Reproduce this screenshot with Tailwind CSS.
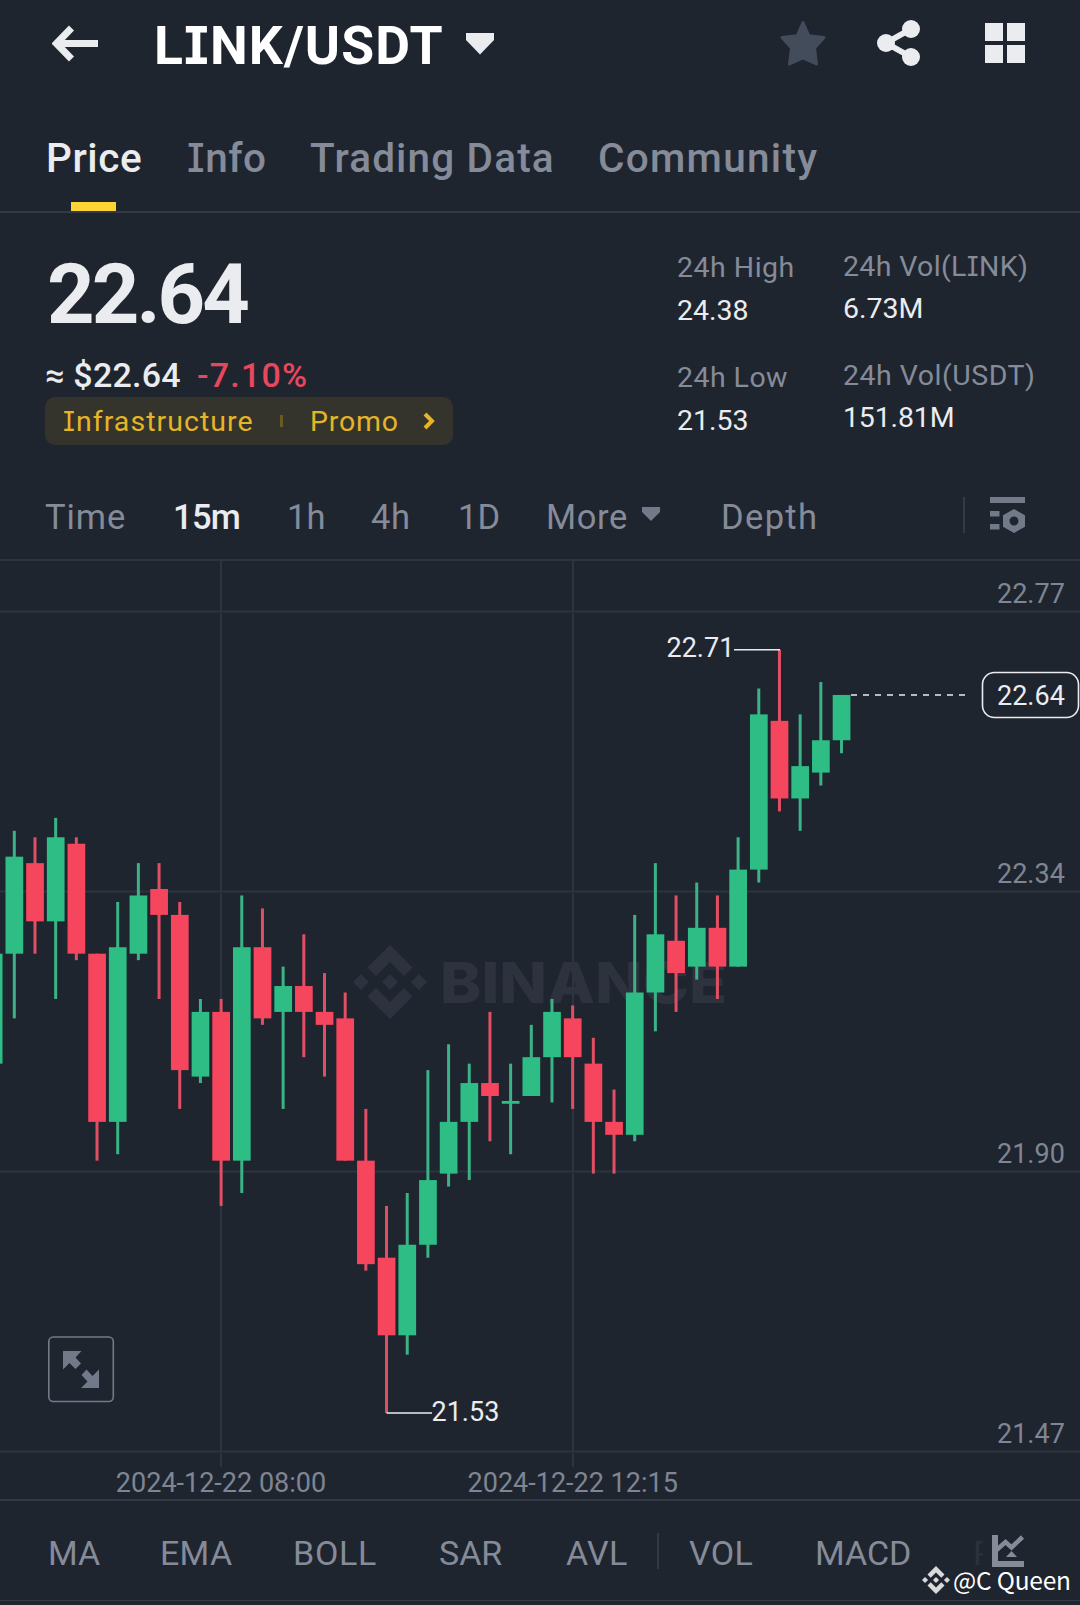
<!DOCTYPE html>
<html lang="en">
<head>
<meta charset="utf-8">
<title>LINK/USDT</title>
<script src="https://cdn.jsdelivr.net/npm/@tailwindcss/browser@4"></script>
</head>
<body class="bg-[#1f252f]">
<div class="relative flex h-[1605px] w-[1080px] flex-col overflow-hidden bg-[#1f252f] font-['Roboto','Liberation_Sans',sans-serif] whitespace-nowrap text-[#858b99]">

  <header class="flex h-[91px] shrink-0 items-center pl-[52px]">
    <svg class="mb-[3px] h-[46px] w-[48px]" viewBox="0 0 48 46" fill="none" stroke="#eaecef" stroke-width="7"><path d="M4.500 22.500H46M19.500 7L4.500 22.500L19.500 38"/></svg>
    <h1 class="ml-[54px] w-[312px] text-[53.500px] leading-none font-bold tracking-[1.100px] text-white">L<span class="font-['Inter'] text-[52px] [font-feature-settings:'cv08']">I</span>NK/USDT</h1>
    <svg class="mb-[3px] h-[22px] w-[28px]" viewBox="0 0 28 22" fill="#eaecef"><path d="M0 0H28V7L14 21.500L0 7Z"/></svg>
    <svg class="mb-[5px] ml-[285px] h-[48px] w-[48px]" viewBox="0 0 48 48" fill="#434c5a" stroke="#434c5a" stroke-width="3" stroke-linejoin="round"><path d="M24 3.500L29.800 16.800L45 18.500L35.500 29L37.500 45L24 38.800L10.500 45L12.500 29L3 18.500L18.200 16.800Z"/></svg>
    <svg class="mb-[5px] ml-[48px] h-[46px] w-[46px]" viewBox="0 0 46 46" fill="#eaecef"><path d="M36 9L11 23L36 37" fill="none" stroke="#eaecef" stroke-width="6"/><circle cx="36" cy="9" r="9"/><circle cx="11" cy="23" r="9"/><circle cx="36" cy="37" r="9"/></svg>
    <svg class="mb-[5px] ml-[64px] h-[46px] w-[40px]" viewBox="0 0 40 46" fill="#eaecef"><path d="M0 3h18v18H0zM22 3h18v18H22zM0 25h18v18H0zM22 25h18v18H22z"/></svg>
  </header>

  <nav class="flex h-[122px] shrink-0 items-center border-b-2 border-[#333a46] pt-[14px] pl-[46px] text-[40.500px] leading-none font-medium">
    <div class="relative w-[141px] tracking-[0.600px] text-[#eaecef]">Price<span class="absolute top-[64px] left-[25px] h-[9px] w-[45px] bg-[#fcd535]"></span></div>
    <div class="w-[123px] tracking-[0.500px]"><span class="font-['Inter'] text-[39px] [font-feature-settings:'cv08']">I</span>nfo</div>
    <div class="w-[288px] tracking-[1.150px]">Trading Data</div>
    <div class="tracking-[1.300px]">Community</div>
  </nav>

  <section class="flex h-[232px] shrink-0 pl-[45px]">
    <div class="w-[632px] pt-[40px]">
      <div class="h-[84px] pl-[2px] text-[83px] leading-[84px] font-bold tracking-[-2.900px] text-[#eaecef]">22.64</div>
      <div class="mt-4 flex h-[44px] text-[34px] leading-[44px] font-medium">
        <div class="w-[152px] tracking-[0.250px] text-[#eaecef]">≈ $22.64</div>
        <div class="tracking-[1.200px] text-[#e9475d]">-7.10%</div>
      </div>
      <div class="flex h-[48px] w-[408px] items-center rounded-[10px] bg-[#35342c] pl-[18px] text-[28.500px] leading-none text-[#e6b526]">
        <div class="w-[217px] pt-[2px] tracking-[1.050px]"><span class="font-['Inter'] text-[27px] [font-feature-settings:'cv08']">I</span>nfrastructure</div>
        <div class="h-[12px] w-[3px] bg-[#6b5a25]"></div>
        <div class="ml-[27px] w-[113px] pt-[2px] tracking-[0.800px]">Promo</div>
        <svg class="h-[18px] w-[12px]" viewBox="0 0 12 18" fill="none" stroke="#e6b526" stroke-width="4"><path d="M2 2L9 9L2 16"/></svg>
      </div>
    </div>
    <div class="w-[166px] pt-[33px] text-[28.500px] leading-[43px]">
      <div class="tracking-[0.500px]">24h High</div>
      <div class="text-[#eaecef]">24.38</div>
      <div class="mt-6 tracking-[0.450px]">24h Low</div>
      <div class="text-[#eaecef]">21.53</div>
    </div>
    <div class="pt-[33px] text-[28.500px] leading-[42px]">
      <div class="tracking-[0.350px]">24h Vol(L<span class="font-['Inter'] text-[27px] [font-feature-settings:'cv08']">I</span>NK)</div>
      <div class="text-[#eaecef]">6.73M</div>
      <div class="mt-[25px] tracking-[0.500px]">24h Vol(USDT)</div>
      <div class="tracking-[-0.150px] text-[#eaecef]">151.81M</div>
    </div>
  </section>

  <nav class="mt-[30px] flex h-[84px] shrink-0 items-center pl-[45px] text-[34.500px] leading-none">
    <div class="w-[128px] tracking-[0.900px]">Time</div>
    <div class="w-[114px] font-medium tracking-[-0.700px] text-[#eaecef]">15m</div>
    <div class="w-[84px]">1h</div>
    <div class="w-[87px] tracking-[0.700px]">4h</div>
    <div class="w-[88px]">1D</div>
    <div class="w-[96px] tracking-[0.600px]">More</div>
    <svg class="mb-[2px] h-[18px] w-[18px]" viewBox="0 0 18 18" fill="#727a8a"><path d="M0 0H18V5L9 14L0 5Z"/></svg>
    <div class="ml-[61px] w-[242px] tracking-[1.350px]">Depth</div>
    <div class="mb-[4px] h-[36px] w-[2px] bg-[#333a46]"></div>
    <svg class="mb-[4px] ml-[25px] h-[38px] w-[36px]" viewBox="0 0 36 38" fill="#727a8a"><path d="M0 1H35V7H0zM0 15H9.500V20.500H0zM0 28H9.500V33.500H0z"/><path fill-rule="evenodd" d="M24 13L35 19.300V30.700L24 37L13 30.700V19.300ZM24 20.500A4.500 4.500 0 1 0 24 29.500A4.500 4.500 0 1 0 24 20.500Z"/></svg>
  </nav>

  <svg class="block h-[942px] w-[1080px] shrink-0" viewBox="0 559 1080 942">
    <g fill="#2e343f">
      <path d="M0 559h1080v2H0zM0 610.500h1080v2H0zM0 890.500h1080v2H0zM0 1170.500h1080v2H0zM0 1450.500h1080v2H0zM220 561h2v906h-2zM572 561h2v906h-2z"/>
      <path d="M0 1499h1080v2H0z" fill="#333a46"/>
    </g>
    <g fill="#2d323e">
      <path d="M390 945L412.500 967.500L404 976L390 962L376 976L367.500 967.500ZM390 1019L412.500 996.500L404 988L390 1002L376 988L367.500 996.500ZM353 982L361 974L369 982L361 990ZM411 982L419 974L427 982L419 990ZM382 982L390 974L398 982L390 990Z"/>
      <text x="440" y="1002.500" textLength="287" lengthAdjust="spacingAndGlyphs" class="font-['Inter'] text-[56px] font-extrabold">BINANCE</text>
    </g>
    <g id="candles"></g>
    <g fill="none" stroke="#eaecef" stroke-width="1.600">
      <path d="M734 649.700H780M386.500 1413H432"/>
      <path d="M851 695H965" stroke-dasharray="6 6"/>
      <rect x="982.500" y="672.500" width="96" height="45" rx="12"/>
    </g>
    <g class="text-[27px]" fill="#eaecef">
      <text x="666.500" y="657">22.71</text>
      <text x="431.500" y="1421">21.53</text>
      <text x="997" y="705">22.64</text>
    </g>
    <g class="text-[27px]" fill="#7f8593">
      <text x="997" y="603">22.77</text>
      <text x="997" y="883">22.34</text>
      <text x="997" y="1163">21.90</text>
      <text x="997" y="1443">21.47</text>
      <text x="221" y="1492" text-anchor="middle">2024-12-22 08:00</text>
      <text x="572.700" y="1492" text-anchor="middle">2024-12-22 12:15</text>
    </g>
    <rect x="48.800" y="1337" width="64.500" height="64.500" rx="4.500" fill="none" stroke="#727a8a" stroke-width="1.600"/>
    <path d="M63 1351H81.500L75.500 1357.500L81 1363.500L75.500 1369L69.500 1363L63 1369.500ZM99 1388H81L87.500 1381.500L81.500 1375L86.500 1369.500L92.500 1376L99 1369.500Z" fill="#727a8a"/>
  </svg>

  <nav class="flex h-[100px] shrink-0 items-center border-b border-[#333a46] pt-[4px] pl-[48px] text-[34px] leading-none">
    <div class="w-[112px]">MA</div>
    <div class="w-[133px] tracking-[0.300px]">EMA</div>
    <div class="w-[146px] tracking-[0.700px]">BOLL</div>
    <div class="w-[127px]">SAR</div>
    <div class="w-[91px] tracking-[0.300px]">AVL</div>
    <div class="mb-[4px] h-[36px] w-[2px] bg-[#333a46]"></div>
    <div class="ml-[30px] w-[126px] tracking-[0.300px]">VOL</div>
    <div class="w-[158px]">MACD</div>
    <div class="w-[10px] overflow-hidden text-[#2b313b]">R</div>
    <svg class="ml-[9px] h-[38px] w-[33px]" viewBox="0 0 33 38" fill="#858b99"><path d="M0 1H6V27H32V33H0Z"/><path d="M4 16.500L13.500 8L19.500 13.500L30.500 3" fill="none" stroke="#858b99" stroke-width="4.500"/><path d="M19.500 17L25 23H14Z"/></svg>
  </nav>

  <div class="absolute top-[1563px] left-[922px] flex items-center gap-[3px] text-white">
    <svg class="h-[28px] w-[28px]" viewBox="353 945 74 74" fill="#d9d9da"><path d="M390 945L412.500 967.500L404 976L390 962L376 976L367.500 967.500ZM390 1019L412.500 996.500L404 988L390 1002L376 988L367.500 996.500ZM353 982L361 974L369 982L361 990ZM411 982L419 974L427 982L419 990ZM382 982L390 974L398 982L390 990Z"/></svg>
    <span class="font-['Noto_Sans_CJK_SC','Noto_Sans',sans-serif] text-[24.500px] leading-[34px] tracking-[-0.200px]">@C Queen</span>
  </div>
</div>

<script>
// [open, close, high, low] in cents
const candles = [
  [2207,2224,2224,2207],
  [2224,2239,2243,2214],[2238,2229,2242,2224],[2229,2242,2245,2217],[2241,2224,2242,2223],
  [2224,2198,2224,2192],[2198,2225,2232,2193],[2224,2233,2238,2223],[2234,2230,2238,2217],
  [2230,2206,2232,2200],[2205,2215,2217,2204],[2215,2192,2217,2185],[2192,2225,2233,2187],
  [2225,2214,2231,2213],[2215,2219,2222,2200],[2219,2215,2227,2208],[2215,2213,2221,2205],
  [2214,2192,2218,2192],[2192,2176,2200,2175],[2177,2165,2185,2153],[2165,2179,2187,2162],
  [2179,2189,2206,2177],[2190,2198,2210,2188],[2198,2204,2207,2189],[2204,2202,2215,2195],
  [2201,2201,2207,2193],[2202,2208,2213,2202],[2208,2215,2217,2201],[2214,2208,2216,2200],
  [2207,2198,2211,2190],[2198,2196,2203,2190],[2196,2218,2230,2195],[2218,2227,2238,2212],
  [2226,2221,2233,2215],[2222,2228,2235,2220],[2228,2222,2233,2217],[2222,2237,2242,2222],
  [2237,2261,2265,2235],[2260,2248,2271,2246],[2248,2253,2261,2243],[2252,2257,2266,2250],
  [2257,2264,2264,2255]
];
const y = p => 649.7 + 6.468 * (2271 - p);
document.getElementById('candles').innerHTML = candles.map(([o, c, h, l], i) => {
  const x = 14.3 + 20.68 * (i - 1), up = c >= o;
  const flat = o === c;
  const top = y(Math.max(o, c)) - (flat ? 1.5 : 0), height = flat ? 2.8 : Math.abs(y(o) - y(c));
  return `<rect x="${x - 1.5}" y="${y(h)}" width="3" height="${y(l) - y(h)}" fill="${up ? '#3cb287' : '#e14f64'}"/>` +
         `<rect x="${x - 8.8}" y="${top}" width="17.7" height="${height}" fill="${up ? '#2ebd85' : '#f6465d'}"/>`;
}).join('');
</script>
</body>
</html>
